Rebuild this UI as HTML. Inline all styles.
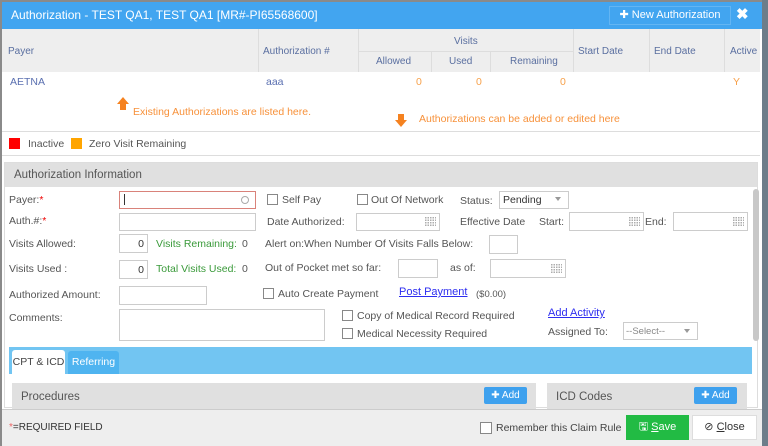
<!DOCTYPE html><html><head><style>
*{box-sizing:border-box;margin:0;padding:0}
body{width:768px;height:446px;overflow:hidden;background:#8a8a8a;font-family:"Liberation Sans",sans-serif;font-size:10.5px;color:#555;position:relative}
.a{position:absolute;white-space:nowrap}
.m{left:2px;top:2px;width:760px;height:444px;background:#fff}
.hd{left:0;top:0;width:760px;height:27px;background:#42a5f0;color:#fff;font-size:12px;line-height:27px;padding-left:9px}
.th{color:#5a6fa0;font-size:10px}
.vl{width:1px;background:#ddd}
.inp{border:1px solid #ccc;background:#fff}
.cb{width:11px;height:11px;border:1px solid #888;background:#fff}
.lab{color:#555;font-size:10.5px}
.cal{width:11px;height:9px;background:repeating-linear-gradient(90deg,#999 0 1.5px,#fff 1.5px 2.5px);opacity:.8}
.cal:after{content:"";position:absolute;left:0;top:0;width:11px;height:9px;background:repeating-linear-gradient(0deg,transparent 0 1.5px,#fff 1.5px 2.5px)}
.btn{background:#3ea1ee;color:#fff;font-size:10px;text-align:center;border-radius:2px}
</style></head><body>
<div class="a" style="left:762px;top:0;width:6px;height:446px;background:#6d7d8a"></div>
<div class="a m">
<div class="a hd">Authorization - TEST QA1, TEST QA1 [MR#-PI65568600]</div>
<div class="a" style="left:607px;top:4px;width:122px;height:19px;border:1px solid #63b5f3;color:#fff;font-size:11px;line-height:17px;text-align:center">✚ New Authorization</div>
<div class="a" style="left:734px;top:3px;color:#fff;font-size:15px;font-weight:bold">✖</div>
<div class="a" style="left:0;top:27px;width:758px;height:43px;background:#eee"></div>
<div class="a vl" style="left:256px;top:27px;height:43px"></div>
<div class="a vl" style="left:356px;top:27px;height:43px"></div>
<div class="a" style="left:356px;top:49px;width:215px;height:1px;background:#ddd"></div>
<div class="a vl" style="left:429px;top:50px;height:20px"></div>
<div class="a vl" style="left:488px;top:50px;height:20px"></div>
<div class="a vl" style="left:571px;top:27px;height:43px"></div>
<div class="a vl" style="left:647px;top:27px;height:43px"></div>
<div class="a vl" style="left:722px;top:27px;height:43px"></div>
<div class="a th" style="left:6px;top:44px">Payer</div>
<div class="a th" style="left:261px;top:44px">Authorization #</div>
<div class="a th" style="left:452px;top:34px">Visits</div>
<div class="a th" style="left:374px;top:54px">Allowed</div>
<div class="a th" style="left:447px;top:54px">Used</div>
<div class="a th" style="left:508px;top:54px">Remaining</div>
<div class="a th" style="left:576px;top:44px">Start Date</div>
<div class="a th" style="left:652px;top:44px">End Date</div>
<div class="a th" style="left:728px;top:44px">Active</div>
<div class="a" style="left:8px;top:74px;color:#5a6fb0;font-size:10.5px">AETNA</div>
<div class="a" style="left:264px;top:74px;color:#5a6fb0;font-size:10.5px">aaa</div>
<div class="a" style="left:414px;top:74px;color:#f7a04a">0</div>
<div class="a" style="left:474px;top:74px;color:#f7a04a">0</div>
<div class="a" style="left:558px;top:74px;color:#f7a04a">0</div>
<div class="a" style="left:731px;top:74px;color:#f7a04a">Y</div>
<div class="a" style="left:115px;top:95px;width:0;height:0;border-left:6px solid transparent;border-right:6px solid transparent;border-bottom:7px solid #f58220"></div>
<div class="a" style="left:118px;top:102px;width:6px;height:6px;background:#f58220"></div>
<div class="a" style="left:131px;top:104px;color:#f7913a;font-size:10.5px">Existing Authorizations are listed here.</div>
<div class="a" style="left:396px;top:112px;width:6px;height:6px;background:#f58220"></div>
<div class="a" style="left:393px;top:118px;width:0;height:0;border-left:6px solid transparent;border-right:6px solid transparent;border-top:7px solid #f58220"></div>
<div class="a" style="left:417px;top:111px;color:#f7913a;font-size:10.5px">Authorizations can be added or edited here</div>
<div class="a" style="left:0;top:129px;width:758px;height:1px;background:#ddd"></div>
<div class="a" style="left:7px;top:136px;width:11px;height:11px;background:#f00"></div>
<div class="a" style="left:26px;top:136px">Inactive</div>
<div class="a" style="left:69px;top:136px;width:11px;height:11px;background:#ffa500"></div>
<div class="a" style="left:87px;top:136px">Zero Visit Remaining</div>
<div class="a" style="left:0;top:153px;width:758px;height:1px;background:#ddd"></div>
<div class="a" style="left:2px;top:160px;width:754px;height:246px;border:1px solid #ddd;background:#fff"></div>
<div class="a" style="left:3px;top:161px;width:752px;height:24px;background:#e0e0e0;font-size:11.5px;line-height:24px;padding-left:9px">Authorization Information</div>
<div class="a" style="left:751px;top:187px;width:6px;height:152px;background:#c8c8c8;border-radius:3px"></div>
<div class="a lab" style="left:7px;top:192px">Payer:<span style="color:#e00">*</span></div>
<div class="a" style="left:117px;top:189px;width:137px;height:18px;border:1px solid #d9827a;background:#fff"></div>
<div class="a" style="left:122px;top:192px;width:1px;height:11px;background:#333"></div>
<div class="a" style="left:239px;top:194px;width:8px;height:8px;border:1px solid #aaa;border-radius:50%"></div>
<div class="a cb" style="left:265px;top:192px"></div><div class="a lab" style="left:280px;top:192px">Self Pay</div>
<div class="a cb" style="left:355px;top:192px"></div><div class="a lab" style="left:369px;top:192px">Out Of Network</div>
<div class="a lab" style="left:458px;top:193px">Status:</div>
<div class="a inp" style="left:497px;top:189px;width:70px;height:18px;color:#333;padding:2px 0 0 3px">Pending<span style="position:absolute;right:7px;top:5px;border-left:3px solid transparent;border-right:3px solid transparent;border-top:4px solid #999"></span></div>
<div class="a lab" style="left:7px;top:213px">Auth.#:<span style="color:#e00">*</span></div>
<div class="a inp" style="left:117px;top:211px;width:137px;height:18px"></div>
<div class="a lab" style="left:265px;top:214px">Date Authorized:</div>
<div class="a inp" style="left:354px;top:211px;width:84px;height:18px"></div><div class="a cal" style="left:423px;top:215px"></div>
<div class="a lab" style="left:458px;top:214px">Effective Date</div>
<div class="a lab" style="left:537px;top:214px">Start:</div>
<div class="a inp" style="left:567px;top:210px;width:75px;height:19px"></div><div class="a cal" style="left:627px;top:215px"></div>
<div class="a lab" style="left:643px;top:214px">End:</div>
<div class="a inp" style="left:671px;top:210px;width:75px;height:19px"></div><div class="a cal" style="left:731px;top:215px"></div>
<div class="a lab" style="left:7px;top:236px">Visits Allowed:</div>
<div class="a inp" style="left:117px;top:232px;width:29px;height:19px;text-align:right;padding:3px 3px 0 0;color:#333">0</div>
<div class="a" style="left:154px;top:236px;color:#3a9a3a">Visits Remaining:</div><div class="a" style="left:240px;top:236px">0</div>
<div class="a lab" style="left:263px;top:236px">Alert on:When Number Of Visits Falls Below:</div>
<div class="a inp" style="left:487px;top:233px;width:29px;height:19px"></div>
<div class="a lab" style="left:7px;top:261px">Visits Used :</div>
<div class="a inp" style="left:117px;top:258px;width:29px;height:19px;text-align:right;padding:3px 3px 0 0;color:#333">0</div>
<div class="a" style="left:154px;top:261px;color:#3a9a3a">Total Visits Used:</div><div class="a" style="left:240px;top:261px">0</div>
<div class="a lab" style="left:263px;top:260px">Out of Pocket met so far:</div>
<div class="a inp" style="left:396px;top:257px;width:40px;height:19px"></div>
<div class="a lab" style="left:448px;top:260px">as of:</div>
<div class="a inp" style="left:488px;top:257px;width:76px;height:19px"></div><div class="a cal" style="left:549px;top:262px"></div>
<div class="a lab" style="left:7px;top:287px">Authorized Amount:</div>
<div class="a inp" style="left:117px;top:284px;width:88px;height:19px"></div>
<div class="a cb" style="left:261px;top:286px"></div><div class="a lab" style="left:276px;top:286px">Auto Create Payment</div>
<div class="a" style="left:397px;top:284px;color:#2d2df0;text-decoration:underline;font-size:11px">Post Payment</div>
<div class="a" style="left:474px;top:287px;font-size:9.5px">($0.00)</div>
<div class="a lab" style="left:7px;top:310px">Comments:</div>
<div class="a inp" style="left:117px;top:307px;width:206px;height:32px"></div>
<div class="a cb" style="left:340px;top:308px"></div><div class="a lab" style="left:355px;top:308px">Copy of Medical Record Required</div>
<div class="a cb" style="left:340px;top:326px"></div><div class="a lab" style="left:355px;top:326px">Medical Necessity Required</div>
<div class="a" style="left:546px;top:305px;color:#2d2df0;text-decoration:underline;font-size:11px">Add Activity</div>
<div class="a lab" style="left:546px;top:324px">Assigned To:</div>
<div class="a inp" style="left:621px;top:320px;width:75px;height:18px;color:#888;font-size:9.5px;padding:3px 0 0 2px">--Select--<span style="position:absolute;right:7px;top:6px;border-left:3px solid transparent;border-right:3px solid transparent;border-top:4px solid #999"></span></div>
<div class="a" style="left:7px;top:345px;width:743px;height:27px;background:#72c5f2"></div>
<div class="a" style="left:10px;top:348px;width:53px;height:24px;background:#fff;border-radius:3px 3px 0 0;font-size:10.5px;line-height:24px;text-align:center;color:#444">CPT &amp; ICD</div>
<div class="a" style="left:66px;top:349px;width:51px;height:23px;background:#4fb4f0;border-radius:3px 3px 0 0;color:#fff;font-size:10.5px;line-height:23px;text-align:center">Referring</div>
<div class="a" style="left:10px;top:381px;width:524px;height:28px;background:#e0e0e0;font-size:11.5px;line-height:28px;padding-left:9px">Procedures</div>
<div class="a btn" style="left:482px;top:385px;width:43px;height:17px;line-height:17px">✚ Add</div>
<div class="a" style="left:545px;top:381px;width:200px;height:28px;background:#e0e0e0;font-size:11.5px;line-height:28px;padding-left:9px">ICD Codes</div>
<div class="a btn" style="left:692px;top:385px;width:43px;height:17px;line-height:17px">✚ Add</div>
<div class="a" style="left:0;top:407px;width:760px;height:37px;background:#eee;border-top:1px solid #ccc"></div>
<div class="a" style="left:7px;top:420px;font-size:10px;color:#333"><span style="color:#e66">*</span>=REQUIRED FIELD</div>
<div class="a cb" style="left:478px;top:420px;width:12px;height:12px"></div>
<div class="a" style="left:494px;top:420px;color:#444">Remember this Claim Rule</div>
<div class="a" style="left:624px;top:413px;width:63px;height:25px;background:#22bb44;color:#fff;font-size:11px;line-height:25px;text-align:center">🖫 <u>S</u>ave</div>
<div class="a" style="left:690px;top:413px;width:65px;height:25px;background:#fff;border:1px solid #ddd;color:#333;font-size:11px;line-height:23px;text-align:center">⊘ <u>C</u>lose</div>
</div>
</body></html>
